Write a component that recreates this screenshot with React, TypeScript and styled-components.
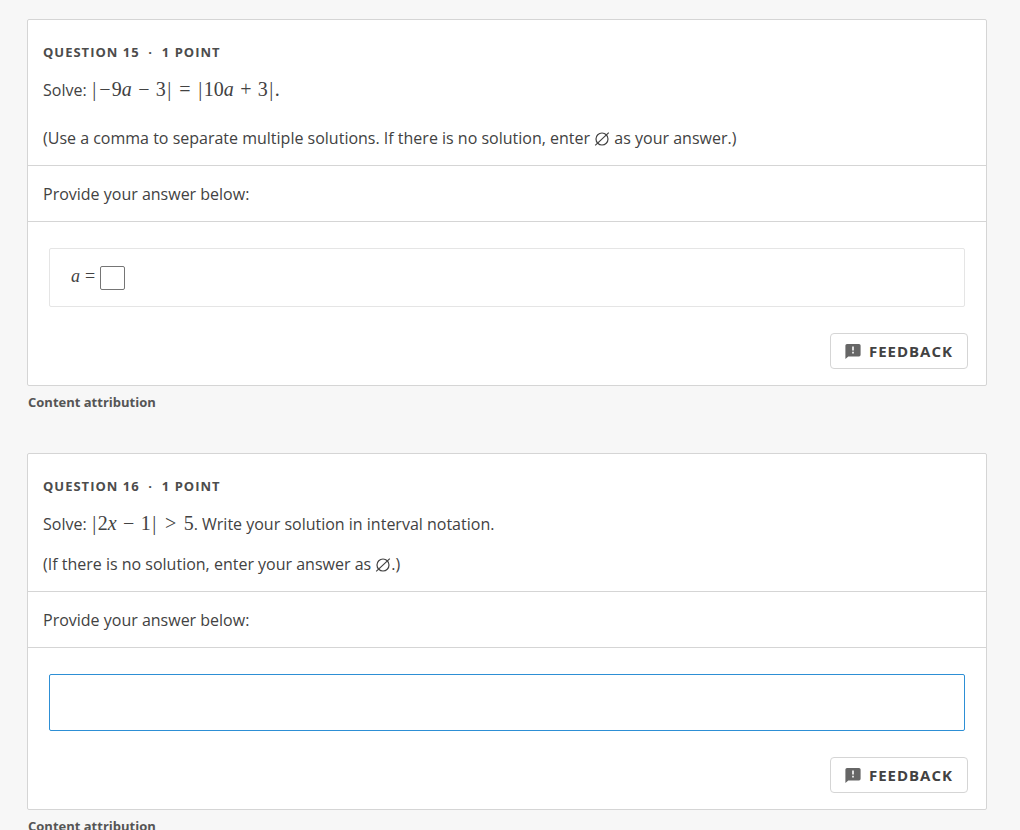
import React from "react";
import styled, { createGlobalStyle } from "styled-components";

const GlobalStyle = createGlobalStyle`
  *, *::before, *::after { box-sizing: border-box; }
  body {
    margin: 0;
    background: #f7f7f7;
    color: #424242;
    font-family: "Open Sans", "Noto Sans", sans-serif;
    font-size: 16px;
    line-height: 24px;
  }
`;

const Page = styled.main`
  padding: 19px 33px 0 27px;
`;

const Item = styled.section`
  margin-bottom: 37px;
`;

const Card = styled.article`
  background: #fff;
  border: 1px solid #d5d5d5;
  border-radius: 2px;
`;

const Prompt = styled.header`
  padding: 24px 15px 15px;
`;

const Title = styled.h2`
  margin: 0 0 18px;
  color: #4c4c4c;
  font-size: 13px;
  line-height: 16px;
  font-weight: 700;
  letter-spacing: 1px;
  text-transform: uppercase;
  white-space: pre;
`;

const Line = styled.p<{ $gap?: number }>`
  margin: 0 0 ${(p) => p.$gap ?? 0}px;
`;

const Instruction = styled.div`
  padding: 16px 15px 15px;
  border: solid #d5d5d5;
  border-width: 1px 0;
`;

const AnswerArea = styled.div`
  display: flex;
  flex-direction: column;
  padding: 26px 18px 16px 21px;
`;

const AnswerFrame = styled.label`
  display: flex;
  align-items: center;
  gap: 5px;
  height: 59px;
  margin: 0 3px 26px 0;
  padding: 0 21px;
  border: 1px solid #e5e5e5;
  border-radius: 2px;
`;

const SmallInput = styled.input`
  width: 25px;
  height: 24px;
  padding: 0 4px;
  border: 1px solid #757575;
  border-radius: 2px;
  background: #fff;
  font: italic 16px "Liberation Serif", serif;
`;

const WideInput = styled.input`
  height: 57px;
  margin: 0 3px 26px 0;
  padding: 0 20px;
  border: 1px solid #2d8fd5;
  border-radius: 2px;
  outline: none;
  background: #fff;
  color: inherit;
  font: 18px "Liberation Serif", serif;
`;

const FeedbackButton = styled.button`
  display: flex;
  align-items: center;
  align-self: flex-end;
  gap: 8px;
  height: 36px;
  padding: 0 14px;
  border: 1px solid #d5d5d5;
  border-radius: 4px;
  background: #fff;
  color: #424242;
  font: 700 15px/20px "Open Sans", sans-serif;
  letter-spacing: 1px;
  text-transform: uppercase;
  cursor: pointer;

  svg { color: #666; }
`;

const Attribution = styled.a`
  display: block;
  width: fit-content;
  padding: 8px 1px 6px;
  color: #555;
  font-size: 13px;
  line-height: 16px;
  font-weight: 700;
  text-decoration: none;
`;

const Formula = styled.span`
  font-family: "Liberation Serif", serif;
  font-size: 20px;
  line-height: 20px;
  white-space: nowrap;
`;

const Op = styled.span<{ $gap?: number }>`
  display: inline-block;
  width: 14px;
  margin: 0 ${(p) => p.$gap ?? 5}px;
  text-align: center;
`;

const Bar = styled.span`
  display: inline-block;
  width: 7px;
  text-align: center;
`;

const AnswerName = styled.span`
  display: flex;
  gap: 5px;
  padding-bottom: 3px;
  font: 18px/20px "Liberation Serif", serif;
`;

const EmptySetIcon = styled.svg`
  width: 16px;
  height: 16px;
  vertical-align: -3px;
`;

function EmptySet() {
  return (
    <EmptySetIcon viewBox="0 0 16 16" fill="none" stroke="currentColor" strokeWidth="1.2" role="img" aria-label="empty set">
      <circle cx="8" cy="8" r="6" />
      <path d="M1.2 14.4 14.8 1.6" />
    </EmptySetIcon>
  );
}

function Feedback() {
  return (
    <FeedbackButton type="button">
      <svg width="16" height="16" viewBox="0 0 16 16" fill="currentColor" aria-hidden="true">
        <path fillRule="evenodd" d="M2 1h12a1.6 1.6 0 0 1 1.6 1.6v9.2a1.6 1.6 0 0 1-1.6 1.6H3.3L.4 16V2.6A1.6 1.6 0 0 1 2 1Zm5.2 2.5v4h1.6v-4Zm0 5.3v1.7h1.6V8.8Z" />
      </svg>
      Feedback
    </FeedbackButton>
  );
}

interface QuestionProps {
  number: number;
  prompt: React.ReactNode;
  children: React.ReactNode;
}

function Question({ number, prompt, children }: QuestionProps) {
  return (
    <Item>
      <Card>
        <Prompt>
          <Title>{`Question ${number}  ·  1 point`}</Title>
          {prompt}
        </Prompt>
        <Instruction>Provide your answer below:</Instruction>
        <AnswerArea>
          {children}
          <Feedback />
        </AnswerArea>
      </Card>
      <Attribution href="#attribution">Content attribution</Attribution>
    </Item>
  );
}

export default function App() {
  return (
    <>
      <GlobalStyle />
      <Page>
        <Question
          number={15}
          prompt={
            <>
              <Line $gap={24}>
                Solve:{" "}
                <Formula>
                  <Bar>|</Bar><Op $gap={0}>−</Op>9<i>a</i><Op>−</Op>3<Bar>|</Bar><Op>=</Op>
                  <Bar>|</Bar>10<i>a</i><Op>+</Op>3<Bar>|</Bar>.
                </Formula>
              </Line>
              <Line>
                (Use a comma to separate multiple solutions. If there is no solution, enter <EmptySet /> as your answer.)
              </Line>
            </>
          }
        >
          <AnswerFrame>
            <AnswerName><i>a</i><span>=</span></AnswerName>
            <SmallInput aria-label="a equals" />
          </AnswerFrame>
        </Question>
        <Question
          number={16}
          prompt={
            <>
              <Line $gap={16}>
                Solve:{" "}
                <Formula>
                  <Bar>|</Bar>2<i>x</i><Op>−</Op>1<Bar>|</Bar><Op $gap={6}>&gt;</Op>5
                </Formula>
                . Write your solution in interval notation.
              </Line>
              <Line>
                (If there is no solution, enter your answer as <EmptySet />.)
              </Line>
            </>
          }
        >
          <WideInput aria-label="Your answer" />
        </Question>
      </Page>
    </>
  );
}
